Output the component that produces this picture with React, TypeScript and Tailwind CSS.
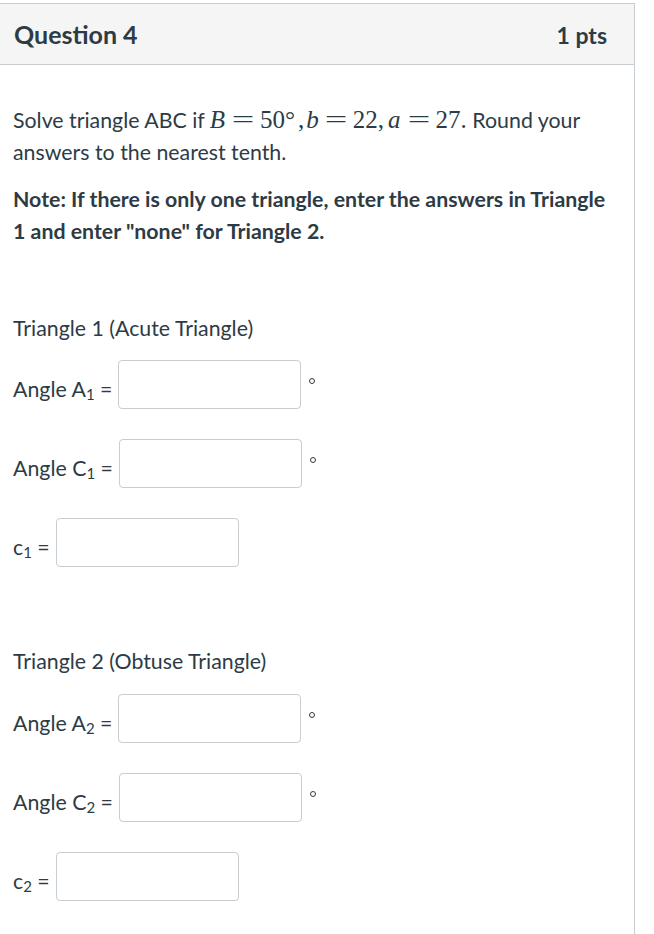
import React from "react";

const lato = { fontFamily: "Lato, 'Noto Sans', sans-serif" };
const serif = { fontFamily: "'Liberation Serif', 'DejaVu Serif', serif" };

function Sub({ children }: { children: React.ReactNode }) {
  return <sub className="text-[15px] relative top-[3px] align-baseline">{children}</sub>;
}

function Eq({ className }: { className: string }) {
  return (
    <span className={`inline-block w-[26px] text-center ${className}`}>
      <span className="inline-block scale-x-[1.6]">=</span>
    </span>
  );
}

function Row({ label, deg }: { label: React.ReactNode; deg?: boolean }) {
  return (
    <div className="flex items-start">
      <div className="text-[21.33px] leading-[24px] pt-[17px] pr-[6px] whitespace-nowrap">{label}</div>
      <div className="w-[183px] h-[49px] border border-[#c7cdd1] rounded-[4px] bg-white" />
      {deg && <div className="ml-[8px] mt-[18px] w-[6px] h-[6px] rounded-full border border-[#2d3b45]" />}
    </div>
  );
}

export default function App() {
  return (
    <div className="w-[654px] h-[934px] bg-white pt-[3px] overflow-hidden text-[#2d3b45]" style={lato}>
      <div className="w-[635px] h-[931px] border-t border-r border-[#c7cdd1]">
        <div className="h-[61px] bg-[#f5f5f5] border-b border-[#c7cdd1] flex items-center justify-between pl-[14px] pr-[27px]">
          <span className="text-[25px] font-bold pt-[2px]">Question 4</span>
          <span className="text-[23px] font-bold pt-[2px]">1 pts</span>
        </div>
        <div className="pl-[13px] pr-[24px] pt-[39px]">
          <p className="text-[21.33px] leading-[32px]">
            Solve triangle ABC if{" "}
            <span className="text-[25px] leading-[24px] whitespace-nowrap" style={serif}>
              <i>B</i>
              <Eq className="ml-[5px]" />
              <span className="ml-[4px]">50°</span>
              <span className="ml-[3px]">,</span>
              <i className="ml-[2px]">b</i>
              <Eq className="ml-[4px]" />
              <span className="ml-[4px]">22,</span>
              <i className="ml-[4px]">a</i>
              <Eq className="ml-[5px]" />
              <span className="ml-[4px]">27.</span>
            </span>{" "}
            Round your answers to the nearest tenth.
          </p>
          <p className="text-[21.33px] leading-[32px] font-bold mt-[15px]">
            Note: If there is only one triangle, enter the answers in Triangle 1 and enter "none" for Triangle 2.
          </p>
          <div className="text-[21.33px] leading-[24px] mt-[69px]">Triangle 1 (Acute Triangle)</div>
          <div className="mt-[20px] flex flex-col gap-[30px]">
            <Row label={<>Angle A<Sub>1</Sub> =</>} deg />
            <Row label={<>Angle C<Sub>1</Sub> =</>} deg />
            <Row label={<>c<Sub>1</Sub> =</>} />
          </div>
          <div className="text-[21.33px] leading-[24px] mt-[82px]">Triangle 2 (Obtuse Triangle)</div>
          <div className="mt-[21px] flex flex-col gap-[30px]">
            <Row label={<>Angle A<Sub>2</Sub> =</>} deg />
            <Row label={<>Angle C<Sub>2</Sub> =</>} deg />
            <Row label={<>c<Sub>2</Sub> =</>} />
          </div>
        </div>
      </div>
    </div>
  );
}
